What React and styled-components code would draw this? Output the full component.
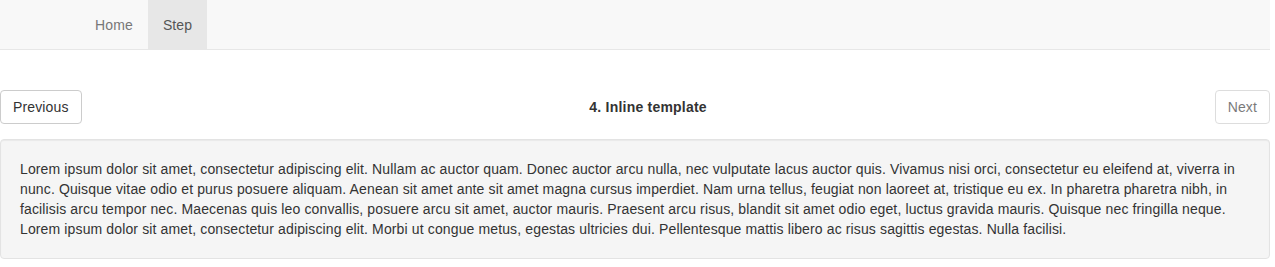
import React from 'react'
import styled, {createGlobalStyle} from 'styled-components'

const GlobalStyle = createGlobalStyle`
    html, body {
        margin: 0;
        padding: 0;
        background: #fff;
    }
    body {
        font-family: "Liberation Sans", Arial, Helvetica, sans-serif;
        font-size: 14px;
        line-height: 20px;
        color: #333;
        letter-spacing: 0.13px;
    }
`

const Page = styled.div`
    width: 1270px;
`

const Navbar = styled.nav`
    height: 49px;
    background: #f8f8f8;
    border-bottom: 1px solid #e7e7e7;
    display: flex;
    padding-left: 80px;
`

const NavLink = styled.a`
    display: block;
    padding: 15px;
    line-height: 20px;
    color: ${props => props.active ? '#555' : '#777'};
    background: ${props => props.active ? '#e7e7e7' : 'transparent'};
    text-decoration: none;
    cursor: pointer;
`

const Content = styled.div`
    padding-top: 40px;
`

const StepBar = styled.div`
    display: flex;
    justify-content: space-between;
    align-items: center;
    margin-bottom: 15px;
`

const StepTitle = styled.div`
    font-weight: bold;
    letter-spacing: 0.22px;
`

const Button = styled.button`
    font-family: inherit;
    font-size: 14px;
    line-height: 20px;
    letter-spacing: inherit;
    padding: 6px 12px;
    background: #fff;
    color: #333;
    border: 1px solid #ccc;
    border-radius: 4px;
    cursor: pointer;

    &:disabled {
        opacity: 0.65;
        cursor: not-allowed;
    }
`

const Well = styled.div`
    background: #f5f5f5;
    border: 1px solid #e3e3e3;
    border-radius: 4px;
    padding: 19px;
    box-shadow: inset 0 1px 1px rgba(0, 0, 0, 0.05);
`

const text = 'Lorem ipsum dolor sit amet, consectetur adipiscing elit. Nullam ac auctor quam. Donec auctor arcu nulla, nec vulputate lacus auctor quis. Vivamus nisi orci, consectetur eu eleifend at, viverra in nunc. Quisque vitae odio et purus posuere aliquam. Aenean sit amet ante sit amet magna cursus imperdiet. Nam urna tellus, feugiat non laoreet at, tristique eu ex. In pharetra pharetra nibh, in facilisis arcu tempor nec. Maecenas quis leo convallis, posuere arcu sit amet, auctor mauris. Praesent arcu risus, blandit sit amet odio eget, luctus gravida mauris. Quisque nec fringilla neque. Lorem ipsum dolor sit amet, consectetur adipiscing elit. Morbi ut congue metus, egestas ultricies dui. Pellentesque mattis libero ac risus sagittis egestas. Nulla facilisi.'

const App = () => {
    return (
        <Page>
            <GlobalStyle />
            <Navbar>
                <NavLink>Home</NavLink>
                <NavLink active>Step</NavLink>
            </Navbar>
            <Content>
                <StepBar>
                    <Button>Previous</Button>
                    <StepTitle>4. Inline template</StepTitle>
                    <Button disabled>Next</Button>
                </StepBar>
                <Well>{text}</Well>
            </Content>
        </Page>
    )
}

export default App
